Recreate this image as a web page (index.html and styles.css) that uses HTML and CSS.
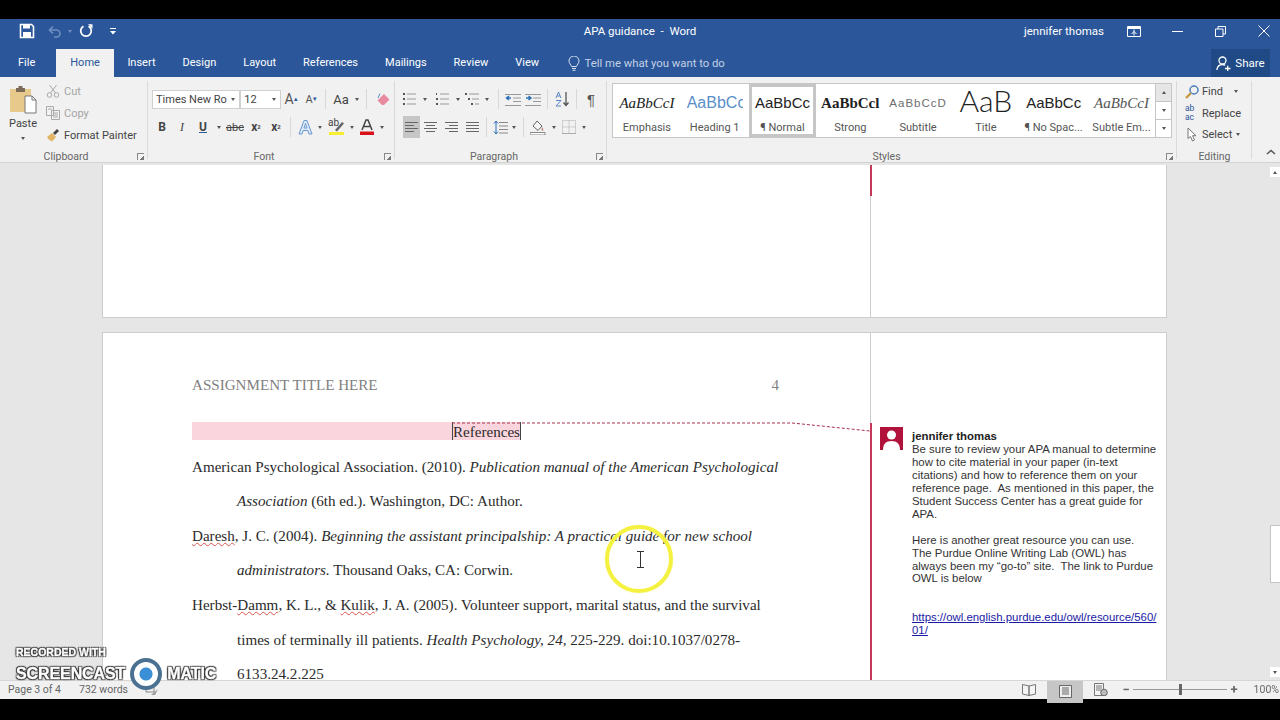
FILE: index.html
```html
<!DOCTYPE html>
<html lang="en">

<head>
    <meta charset="UTF-8">
    <title>APA guidance - Word</title>
    <link rel="stylesheet" href="styles.css">
</head>

<body>
    <div class="app">
        <!-- title bar -->
        <div class="titlebar">
            <div class="quick">
                <svg class="q-save" width="16" height="16" viewBox="0 0 16 16"><path d="M1.5 1.5h11l2 2v11h-13z" fill="none" stroke="#fff" stroke-width="1.6"/><path d="M4 1.5h7v4H4zM4 9h8v5.5H4z" fill="#fff"/></svg>
                <svg class="q-undo" width="14" height="14" viewBox="0 0 14 14"><path d="M2 6h6.5a3.5 3.5 0 0 1 0 7H6M5 2.5 1.5 6 5 9.500" fill="none" stroke="#6f8fc0" stroke-width="1.6"/></svg>
                <span class="q-caret dim"></span>
                <svg class="q-redo" width="14" height="14" viewBox="0 0 14 14"><path d="M9.500 2.200a5.300 5.300 0 1 1-5 0" fill="none" stroke="#fff" stroke-width="1.800"/><path d="M9 .2h4.500v4.500z" fill="#fff"/></svg>
                <svg class="q-custom" width="8" height="8" viewBox="0 0 8 8"><path d="M1 1h6v1H1zM1 4h6L4 7.500z" fill="#fff"/></svg>
            </div>
            <div class="doc-title">APA guidance &nbsp;-&nbsp; Word</div>
            <div class="winctl">
                <span class="user">jennifer thomas</span>
                <span class="win-btn"><svg width="14" height="11" viewBox="0 0 14 11"><path d="M.5.500h13v10H.5z" fill="none" stroke="#fff"/><path d="M1 1h12v2H1z" fill="#fff"/><path d="M7 3.500v6M4.500 8 7 5.500 9.500 8" fill="none" stroke="#fff"/></svg></span>
                <span class="win-btn"><svg width="11" height="11" viewBox="0 0 11 11"><path d="M0 5.500h11" stroke="#fff"/></svg></span>
                <span class="win-btn"><svg width="11" height="11" viewBox="0 0 11 11"><path d="M.5 3h7.500v7.500H.5zM3 3V.5h7.500V8H8" fill="none" stroke="#fff"/></svg></span>
                <span class="win-btn"><svg width="12" height="12" viewBox="0 0 12 12"><path d="M.5.500l11 11M11.500.500l-11 11" stroke="#fff"/></svg></span>
            </div>
        </div>

        <!-- tabs -->
        <div class="tabs">
            <span class="tab tab-file">File</span>
            <span class="tab active">Home</span>
            <span class="tab">Insert</span>
            <span class="tab">Design</span>
            <span class="tab">Layout</span>
            <span class="tab">References</span>
            <span class="tab">Mailings</span>
            <span class="tab">Review</span>
            <span class="tab">View</span>
            <span class="tell">
                <svg width="12" height="15" viewBox="0 0 12 15"><path d="M3.500 10.500C3 8.500 1 7.500 1 5a5 5 0 0 1 10 0c0 2.500-2 3.500-2.500 5.500zM4 12.500h4M4.500 14.300h3" fill="none" stroke="#d6e0ef"/></svg>
                Tell me what you want to do
            </span>
            <span class="share">
                <svg width="15" height="15" viewBox="0 0 15 15"><circle cx="6.500" cy="4.500" r="3.500" fill="none" stroke="#fff" stroke-width="1.300"/><path d="M.8 14c.5-3.500 2.500-5.500 5.700-5.500 1 0 2 .3 2.700.8M9 12.500h5.500M11.700 9.800v5.200" fill="none" stroke="#fff" stroke-width="1.300"/></svg>
                Share
            </span>
        </div>

        <!-- ribbon -->
        <div class="ribbon">
            <div class="group g-clipboard">
                <div class="group-body clip-body">
                    <div class="paste">
                        <svg width="28" height="29" viewBox="0 0 28 29"><path d="M1 4h21v23H1z" fill="#e8c98c"/><path d="M7 3h9v4H7z" fill="#7a6a5a"/><path d="M9.500 1h4v3h-4z" fill="#7a6a5a"/><path d="M16 11h7l4 4v13H16z" fill="#fff" stroke="#777"/><path d="M23 11v4h4" fill="none" stroke="#777"/></svg>
                        <span class="paste-label">Paste</span>
                        <span class="caret"></span>
                    </div>
                    <div class="clip-list">
                        <div class="clip-row dim-row">
                            <svg width="14" height="14" viewBox="0 0 14 14"><circle cx="3.500" cy="11" r="2.300" fill="none" stroke="#aaa"/><circle cx="10.500" cy="11" r="2.300" fill="none" stroke="#aaa"/><path d="M4.500 9 10.500 1M9.500 9 3.500 1" stroke="#aaa" fill="none"/></svg>
                            Cut
                        </div>
                        <div class="clip-row dim-row">
                            <svg width="14" height="14" viewBox="0 0 14 14"><path d="M.5.500h7v9h-7zM5.500 4.500h8v9h-8z" fill="#f2f2f2" stroke="#aaa"/><path d="M7 7h5M7 9h5M7 11h5M2 3h4" stroke="#aaa"/></svg>
                            Copy
                        </div>
                        <div class="clip-row">
                            <svg width="14" height="14" viewBox="0 0 14 14"><path d="M1 9 6 5l4 4-4 4.500C4 13 2 11 1 9z" fill="#e2b565"/><path d="M7 5 11 1l2 2-4 4z" fill="#444"/></svg>
                            Format Painter
                        </div>
                    </div>
                </div>
                <div class="group-label label-clip">Clipboard<span class="launcher"></span></div>
            </div>

            <div class="group g-font">
                <div class="group-body">
                    <div class="tool-row">
                        <span class="combo combo-name">Times New Ro<span class="caret"></span></span>
                        <span class="combo combo-size">12<span class="caret"></span></span>
                        <span class="tool w20 glyph-a">A<sup>&#9652;</sup></span>
                        <span class="tool w20 glyph-a small">A<sup>&#9662;</sup></span>
                        <span class="sep"></span>
                        <span class="tool w22 txt-aa">Aa</span><span class="tool w10"><span class="caret"></span></span>
                        <span class="sep"></span>
                        <span class="tool w24"><svg width="15" height="15" viewBox="0 0 15 15"><path d="M6 13 1.500 8.500 8 2l5.500 5.500L8 13z" fill="#e88aa0"/><path d="M4 1.500 2 6" stroke="#5a87c5"/></svg></span>
                    </div>
                    <div class="tool-row">
                        <span class="tool w20 fmt bold">B</span>
                        <span class="tool w20 fmt ital">I</span>
                        <span class="tool w22 fmt under">U</span>
                        <span class="tool w10"><span class="caret"></span></span>
                        <span class="tool w22 fmt strike">abc</span>
                        <span class="tool w20 fmt bold">x<sub>2</sub></span>
                        <span class="tool w20 fmt bold">x<sup>2</sup></span>
                        <span class="sep"></span>
                        <span class="tool w20"><svg width="15" height="16" viewBox="0 0 15 16"><path d="M1 15 6 1.500h3L14 15h-3l-1.200-3.500H5.200L4 15zM6 9h3L7.500 4.500z" fill="#dbe8f6" stroke="#6c9bd2" fill-rule="evenodd"/></svg></span>
                        <span class="tool w10"><span class="caret"></span></span>
                        <span class="tool w22 aly"><span class="aly-text">ab</span><svg width="17" height="17" viewBox="0 0 17 17"><path d="M7 11 14 3l2 1.500-7 8z" fill="#666"/><path d="M1 13h15v3H1z" fill="#f7ee2f"/></svg></span>
                        <span class="tool w10"><span class="caret"></span></span>
                        <span class="tool w20"><svg width="16" height="16" viewBox="0 0 16 16"><path d="M3 11 7 1h2l4 10M5 7.500h6" fill="none" stroke="#444" stroke-width="1.500"/><path d="M1 12.500h14V16H1z" fill="#d8131c"/></svg></span>
                        <span class="tool w10"><span class="caret"></span></span>
                    </div>
                </div>
                <div class="group-label label-shift">Font<span class="launcher"></span></div>
            </div>

            <div class="group g-para">
                <div class="group-body">
                    <div class="tool-row">
                        <span class="tool w18"><svg width="14" height="14" viewBox="0 0 14 14"><path d="M1 1h2v2H1zM1 6h2v2H1zM1 11h2v2H1z" fill="#555"/><path d="M5 2h9M5 7h9M5 12h9" stroke="#999"/></svg></span>
                        <span class="tool w14"><span class="caret"></span></span>
                        <span class="tool w20"><svg width="14" height="14" viewBox="0 0 14 14"><path d="M1 1h1v2H1zM1 6h2v2H1zM1 11h2v2H1z" fill="#555"/><path d="M5 2h9M5 7h9M5 12h9" stroke="#999"/></svg></span>
                        <span class="tool w12"><span class="caret"></span></span>
                        <span class="tool w16"><svg width="14" height="14" viewBox="0 0 14 14"><path d="M0 1h2v2H0zM3 6h2v2H3zM6 11h2v2H6z" fill="#555"/><path d="M4 2h10M7 7h7M10 12h4" stroke="#999"/></svg></span>
                        <span class="tool w14"><span class="caret"></span></span>
                        <span class="sep"></span>
                        <span class="tool w20"><svg width="16" height="13" viewBox="0 0 16 13"><path d="M8 5h8M8 8.500h8M0 12.500h16M0 1.500h16" stroke="#999"/><path d="M6 5H2M4 3 1.500 5 4 7" fill="none" stroke="#2b6fb5" stroke-width="1.500"/></svg></span>
                        <span class="tool w20"><svg width="16" height="13" viewBox="0 0 16 13"><path d="M0 1.500h16M8 5h8M8 8.500h8M0 12.500h16" stroke="#999"/><path d="M1 5h4M3.500 3 6 5 3.500 7" fill="none" stroke="#2b6fb5" stroke-width="1.500"/></svg></span>
                        <span class="sep"></span>
                        <span class="tool w20"><svg width="15" height="16" viewBox="0 0 15 16"><path d="M1 7 3.500 1 6 7M2 5h3M1 9.500h5L1 15h5" fill="none" stroke="#5a87c5"/><path d="M11 1v13M8.500 11.500 11 14.500l2.500-3" fill="none" stroke="#555" stroke-width="1.300"/></svg></span>
                        <span class="sep"></span>
                        <span class="tool w20 pilcrow">&para;</span>
                    </div>
                    <div class="tool-row row-align">
                        <span class="tool w17 on"><svg width="13" height="11" viewBox="0 0 13 11"><path d="M0 .5h13M0 3.500h9M0 6.500h13M0 9.500h9" stroke="#666"/></svg></span>
                        <span class="tool w21"><svg width="13" height="11" viewBox="0 0 13 11"><path d="M0 .5h13M2 3.500h9M0 6.500h13M2 9.500h9" stroke="#666"/></svg></span>
                        <span class="tool w21"><svg width="13" height="11" viewBox="0 0 13 11"><path d="M0 .5h13M4 3.500h9M0 6.500h13M4 9.500h9" stroke="#666"/></svg></span>
                        <span class="tool w20"><svg width="13" height="11" viewBox="0 0 13 11"><path d="M0 .5h13M0 3.500h13M0 6.500h13M0 9.500h13" stroke="#666"/></svg></span>
                        <span class="sep"></span>
                        <span class="tool w18"><svg width="15" height="15" viewBox="0 0 15 15"><path d="M6 2.500h9M6 6h9M6 9.500h9M6 13h9" stroke="#888"/><path d="M3 1v13M1 3.500 3 1l2 2.500M1 11.500 3 14l2-2.500" fill="none" stroke="#2b6fb5"/></svg></span>
                        <span class="tool w10"><span class="caret"></span></span>
                        <span class="sep"></span>
                        <span class="tool w20"><svg width="16" height="16" viewBox="0 0 16 16"><path d="M3 7 7 2l5 5-4 4.500z" fill="#f6f6f6" stroke="#666"/><path d="M12 8c1 1.500 1.800 2.500 1 3.500s-2 0-1-3.500z" fill="#c77"/><path d="M0 13.500h15V16H0z" fill="#fff" stroke="#888"/></svg></span>
                        <span class="tool w12"><span class="caret"></span></span>
                        <span class="tool w18"><svg width="14" height="14" viewBox="0 0 14 14"><path d="M.5.500h13v13H.5zM7 .5v13M.5 7h13" fill="none" stroke="#aaa" stroke-dasharray="1 1"/><path d="M0 13.500h14" stroke="#aaa"/></svg></span>
                        <span class="tool w12"><span class="caret"></span></span>
                    </div>
                </div>
                <div class="group-label label-shift">Paragraph<span class="launcher"></span></div>
            </div>

            <div class="group g-styles">
                <div class="group-body">
                    <div class="gallery">
                        <div class="style-item"><span class="preview p-emph">AaBbCcI</span><span class="style-name">Emphasis</span></div>
                        <div class="style-item"><span class="preview p-h1">AaBbCc</span><span class="style-name">Heading 1</span></div>
                        <div class="style-item selected"><span class="preview p-normal">AaBbCc</span><span class="style-name">&para; Normal</span></div>
                        <div class="style-item"><span class="preview p-strong">AaBbCcl</span><span class="style-name">Strong</span></div>
                        <div class="style-item"><span class="preview p-sub">AaBbCcD</span><span class="style-name">Subtitle</span></div>
                        <div class="style-item"><span class="preview p-title">AaB</span><span class="style-name">Title</span></div>
                        <div class="style-item"><span class="preview p-normal">AaBbCc</span><span class="style-name">&para; No Spac...</span></div>
                        <div class="style-item"><span class="preview p-emph p-subtle">AaBbCcI</span><span class="style-name">Subtle Em...</span></div>
                        <div class="gallery-scroll">
                            <span class="gs gs-up"><span class="caret caret-up"></span></span>
                            <span class="gs"><span class="caret"></span></span>
                            <span class="gs gs-more"><span class="caret"></span></span>
                        </div>
                    </div>
                </div>
                <div class="group-label">Styles<span class="launcher"></span></div>
            </div>

            <div class="group g-edit">
                <div class="group-body edit-list">
                    <div class="edit-row">
                        <svg width="14" height="14" viewBox="0 0 14 14"><circle cx="9" cy="5" r="4" fill="none" stroke="#4a7ebb" stroke-width="1.500"/><path d="M6 8 1 13" stroke="#c59a45" stroke-width="2.400"/></svg>
                        Find<span class="caret"></span>
                    </div>
                    <div class="edit-row">
                        <span class="ab-ac">ab<br>ac</span>
                        Replace
                    </div>
                    <div class="edit-row tight">
                        <svg width="14" height="15" viewBox="0 0 14 15"><path d="M3 1v10.500L5.500 9.500 7.500 14l2-1-2-4.300H11z" fill="#fff" stroke="#777"/></svg>
                        Select<span class="caret"></span>
                    </div>
                </div>
                <div class="group-label">Editing</div>
            </div>

            <div class="collapse">
                <svg width="10" height="6" viewBox="0 0 10 6"><path d="M1 5 5 1.500 9 5" fill="none" stroke="#555" stroke-width="1.500"/></svg>
            </div>
        </div>

        <!-- document -->
        <div class="doc">
            <div class="doc-view">
                <div class="page page-prev">
                    <div class="page-body"></div>
                    <div class="page-side"><span class="prev-bar"></span></div>
                </div>
                <div class="page">
                    <div class="page-body body-text">
                        <div class="header-line"><span>ASSIGNMENT TITLE HERE</span><span>4</span></div>
                        <p class="line heading"><span class="hl"><span class="hl-text">References</span></span></p>
                        <p class="line">American Psychological Association. (2010). <em>Publication manual of the American Psychological</em></p>
                        <p class="line hang"><em>Association</em> (6th ed.). Washington, DC: Author.</p>
                        <p class="line"><span class="spell">Daresh</span>, J. C. (2004). <em>Beginning the assistant principalship: A practical guide for new school</em></p>
                        <p class="line hang"><em>administrators.</em> Thousand Oaks, CA: Corwin.</p>
                        <p class="line">Herbst-<span class="spell">Damm</span>, K. L., &amp; <span class="spell">Kulik</span>, J. A. (2005). Volunteer support, marital status, and the survival</p>
                        <p class="line hang">times of terminally ill patients. <em>Health Psychology, 24,</em> 225-229. doi:10.1037/0278-</p>
                        <p class="line hang">6133.24.2.225</p>
                    </div>
                    <div class="page-side">
                        <div class="comment">
                            <svg class="avatar" width="23" height="23" viewBox="0 0 23 23"><path d="M0 0h23v23H0z" fill="#b0123b"/><circle cx="11.500" cy="8" r="4.500" fill="#fff"/><path d="M3 23c0-6 3-9 8.500-9S20 17 20 23z" fill="#fff"/></svg>
                            <div class="comment-text">
                                <div class="comment-author">jennifer thomas</div>
                                Be sure to review your APA manual to determine<br>
                                how to cite material in your paper (in-text<br>
                                citations) and how to reference them on your<br>
                                reference page.&nbsp; As mentioned in this paper, the<br>
                                Student Success Center has a great guide for<br>
                                APA.<br>
                                <br>
                                Here is another great resource you can use.<br>
                                The Purdue Online Writing Lab (OWL) has<br>
                                always been my &ldquo;go-to&rdquo; site.&nbsp; The link to Purdue<br>
                                OWL is below<br>
                                <br>
                                <br>
                                <a class="comment-link" href="#">https://owl.english.purdue.edu/owl/resource/560/<br>01/</a>
                            </div>
                        </div>
                    </div>
                </div>
            </div>
            <div class="vscroll">
                <span class="vs-btn"><span class="caret caret-up"></span></span>
                <span class="vs-thumb"></span>
                <span class="vs-btn"><span class="caret"></span></span>
            </div>

            <!-- dashed line from the comment to the text -->
            <svg class="connector" width="1280" height="517" viewBox="0 0 1280 517"><path d="M452 260H792L870 268" fill="none" stroke="#a8324f" stroke-dasharray="3 2"/></svg>
            <!-- recorder cursor highlight -->
            <div class="cursor-ring"></div>
            <svg class="cursor-beam" width="9" height="17" viewBox="0 0 9 17"><path d="M1 .5h7M1 16.500h7M4.500 .5v16" fill="none" stroke="#333"/></svg>
        </div>

        <!-- status bar -->
        <div class="status">
            <span class="st-page">Page 3 of 4</span>
            <span class="st-words">732 words</span>
            <svg class="st-macro" width="14" height="13" viewBox="0 0 14 13"><path d="M1 1h8v8H1z" fill="none" stroke="#888"/><path d="M6 12l7-6-3 6z" fill="#999"/></svg>
            <span class="st-views">
                <span class="view-btn"><svg width="14" height="13" viewBox="0 0 14 13"><path d="M.5 1.500 7 3v9.500L.5 11zM13.500 1.500 7 3v9.500l6.500-1.500z" fill="#f4f4f4" stroke="#777"/></svg></span>
                <span class="view-btn on"><svg width="13" height="13" viewBox="0 0 13 13"><path d="M.5.5h12v12H.5z" fill="#eee" stroke="#666"/><path d="M3 3h7M3 5h7M3 7h7M3 9h7" stroke="#666"/></svg></span>
                <span class="view-btn"><svg width="14" height="13" viewBox="0 0 14 13"><path d="M.5.5h9v12h-9z" fill="#f4f4f4" stroke="#777"/><path d="M2 3h6M2 5h6M2 7h5" stroke="#777"/><circle cx="10" cy="9.500" r="3.300" fill="#bbb" stroke="#666"/></svg></span>
            </span>
            <span class="zoom-minus">&minus;</span>
            <span class="slider"><span class="thumb"></span></span>
            <span class="zoom-plus">+</span>
            <span class="zoom-val">100%</span>
        </div>
    </div>

    <!-- screen recorder watermark -->
    <div class="watermark">
        <div class="wm-top">RECORDED WITH</div>
        <div class="wm-bottom">
            <span>SCREENCAST</span>
            <span class="wm-logo"></span>
            <span>MATIC</span>
        </div>
    </div>
</body>

</html>
```

FILE: styles.css
```css
* {
    margin: 0px;
    padding: 0px;
    box-sizing: border-box;
}

body {
    background-color: #000;
    font-family: Roboto, "Open Sans", sans-serif;
    height: 720px;
    overflow: hidden;
    position: relative;
}

/* the source is a video frame, everything is a bit soft */
.app {
    margin-top: 19px;
    height: 680px;
    display: flex;
    flex-direction: column;
    filter: blur(0.35px);
}

/* title bar */
.titlebar {
    height: 24px;
    background-color: #2b579a;
    color: #fff;
    display: grid;
    grid-template-columns: 1fr auto 1fr;
    align-items: center;
    font-size: 11.5px;
}

.quick {
    display: flex;
    align-items: center;
    padding-left: 19px;
}

.q-undo {
    margin-left: 13px;
}

.q-caret {
    width: 0;
    height: 0;
    margin-left: 6px;
    border-left: 2.5px solid transparent;
    border-right: 2.5px solid transparent;
    border-top: 3px solid #6f8fc0;
}

.q-redo {
    margin-left: 7px;
}

.q-custom {
    margin-left: 16px;
}

.winctl {
    display: flex;
    align-items: center;
    justify-content: flex-end;
    gap: 11.500px;
}

.user {
    margin-right: 2px;
    white-space: nowrap;
}

.win-btn {
    width: 32px;
    display: flex;
    justify-content: center;
    align-items: center;
}

/* tabs */
.tabs {
    height: 34px;
    padding: 6px 10px 0px 4px;
    background-color: #2b579a;
    color: #fff;
    display: flex;
    font-size: 11px;
}

.tab {
    padding: 0px 13.5px;
    line-height: 28px;
    white-space: nowrap;
}

.tab-file {
    padding: 0px 21px 0px 14px;
}

.tab.active {
    background-color: #f1f1f1;
    color: #2b579a;
    padding: 0px 14px;
}

.tell {
    margin-left: 15px;
    display: flex;
    align-items: center;
    gap: 5px;
    color: #c3d1e6;
    white-space: nowrap;
    font-size: 11.300px;
}

.share {
    margin-left: auto;
    width: 59px;
    background-color: #1f4a86;
    display: flex;
    align-items: center;
    justify-content: center;
    gap: 4px;
    font-size: 11.500px;
}

/* ribbon */
.ribbon {
    height: 86px;
    background-color: #f1f1f1;
    border-bottom: 1px solid #d2d2d2;
    display: flex;
    color: #444;
    font-size: 11px;
    flex-shrink: 0;
}

.group {
    display: flex;
    flex-direction: column;
    position: relative;
    flex-shrink: 0;
}

.group::after {
    content: '';
    position: absolute;
    right: 0;
    top: 4px;
    bottom: 3px;
    width: 1px;
    background-color: #dadada;
}

.group-body {
    height: 72px;
    flex-shrink: 0;
}

.group-label {
    height: 13px;
    line-height: 15px;
    text-align: center;
    font-size: 10.5px;
    color: #666;
    position: relative;
}

.label-clip {
    padding-right: 16px;
}

.label-shift {
    padding-right: 19px;
}

.launcher {
    position: absolute;
    right: 4px;
    top: 4px;
    width: 7px;
    height: 7px;
    border-left: 1px solid #888;
    border-top: 1px solid #888;
    background: linear-gradient(135deg, transparent 60%, #777 60%);
}

.caret {
    display: inline-block;
    width: 0;
    height: 0;
    border-left: 2.500px solid transparent;
    border-right: 2.500px solid transparent;
    border-top: 3px solid #555;
}

.caret-up {
    border-top: 0;
    border-bottom: 3px solid #555;
}

.g-clipboard {
    width: 148px;
}

.clip-body {
    display: flex;
    padding-top: 8px;
}

.paste {
    width: 46px;
    display: flex;
    flex-direction: column;
    align-items: center;
    color: #444;
}

.paste-label {
    margin-top: 1px;
    line-height: 17px;
}

.paste .caret {
    margin-top: 5px;
}

.clip-list {
    display: flex;
    flex-direction: column;
    margin-top: -5px;
}

.clip-row {
    height: 22px;
    display: flex;
    align-items: center;
    gap: 4px;
    white-space: nowrap;
}

.dim-row {
    color: #a5a5a5;
}

.g-font {
    width: 247px;
    padding-left: 4px;
}

.g-para {
    width: 212px;
    padding-left: 5px;
}

.group-body .tool-row:first-child {
    margin-top: 12px;
}

.tool-row {
    display: flex;
    align-items: center;
    height: 20px;
    margin-bottom: 8px;
}

.row-align {
    margin-left: 3px;
}

.tool {
    height: 20px;
    display: flex;
    align-items: center;
    justify-content: center;
    flex-shrink: 0;
}

.w10 { width: 10px; }
.w12 { width: 12px; }
.w14 { width: 14px; }
.w16 { width: 16px; }
.w17 { width: 17px; }
.w18 { width: 18px; }
.w20 { width: 20px; }
.w21 { width: 21px; }
.w22 { width: 22px; }
.w24 { width: 24px; }

.sep {
    width: 1px;
    height: 20px;
    margin: 0px 4px;
    background-color: #d8d8d8;
    flex-shrink: 0;
}

.combo {
    height: 19px;
    background-color: #fff;
    border: 1px solid #d0d0d0;
    display: flex;
    align-items: center;
    justify-content: space-between;
    padding: 0px 4px 0px 3px;
    font-size: 11px;
    white-space: nowrap;
    color: #444;
}

.combo-name {
    width: 89px;
}

.combo-size {
    width: 41px;
}

.glyph-a {
    font-size: 14px;
    color: #555;
}

.glyph-a.small {
    font-size: 11px;
}

.glyph-a sup {
    font-size: 7px;
    color: #2b579a;
    line-height: 0;
}

.txt-aa {
    font-size: 13px;
}

.fmt {
    font-size: 12px;
    color: #444;
}

.bold {
    font-weight: 700;
}

.fmt sub, .fmt sup {
    font-size: 6px;
    line-height: 0;
}

.ital {
    font-style: italic;
    font-family: "Liberation Serif", serif;
}

.under {
    font-weight: 700;
    text-decoration: underline;
    text-decoration-color: #2b579a;
}

.strike {
    text-decoration: line-through;
    font-size: 11px;
}

.aly {
    position: relative;
}

.aly-text {
    position: absolute;
    left: 3px;
    top: 0;
    font-size: 10px;
    line-height: 12px;
    color: #444;
}

.pilcrow {
    font-size: 15px;
    color: #555;
    font-family: "Liberation Sans", sans-serif;
}

.on {
    background-color: #c6c6c6;
    height: 22px;
}

.g-styles {
    width: 570px;
    padding-left: 5px;
}

.g-styles .group-label {
    padding-right: 16px;
}

.g-styles .group-body {
    padding-top: 6px;
}

.gallery {
    width: 560px;
    height: 55px;
    background-color: #fff;
    border: 1px solid #c6c6c6;
    display: flex;
}

.style-item {
    width: 67.800px;
    height: 53px;
    display: flex;
    flex-direction: column;
    align-items: center;
    padding-top: 5px;
    overflow: hidden;
    flex-shrink: 0;
}

.style-item.selected {
    border: 3px solid #c6c6c6;
    padding-top: 2px;
}

.preview {
    height: 28px;
    line-height: 28px;
    white-space: nowrap;
    color: #222;
    font-size: 15px;
}

.style-name {
    font-size: 11px;
    line-height: 17px;
    color: #555;
    white-space: nowrap;
    margin-top: 2px;
}

.p-emph {
    font-family: "Liberation Serif", serif;
    font-style: italic;
}

.p-subtle {
    color: #555;
}

.p-h1 {
    color: #5b8fc7;
    width: 56px;
    overflow: hidden;
    font-size: 16px;
    font-family: "Liberation Sans", sans-serif;
}

.p-normal {
    font-family: "Liberation Sans", sans-serif;
}

.p-strong {
    font-family: "Liberation Serif", serif;
    font-weight: 700;
}

.p-sub {
    color: #6d6d6d;
    font-size: 11.500px;
    letter-spacing: 1px;
    font-family: "Liberation Sans", sans-serif;
}

.p-title {
    font-size: 30px;
    line-height: 22px;
    font-family: Lato, "Liberation Sans", sans-serif;
    font-weight: 300;
}

.gallery-scroll {
    margin-left: auto;
    width: 17px;
    display: flex;
    flex-direction: column;
    border-left: 1px solid #c6c6c6;
}

.gs {
    flex: 1;
    display: flex;
    align-items: center;
    justify-content: center;
    border-bottom: 1px solid #c6c6c6;
}

.gs-up {
    background-color: #e6e6e6;
}

.gs-more {
    border-bottom: 0;
}

.g-edit {
    width: 75px;
}

.edit-list {
    padding: 4px 0px 0px 8px;
}

.edit-row {
    height: 21.500px;
    display: flex;
    align-items: center;
    gap: 3px;
    white-space: nowrap;
}

.edit-row .caret {
    margin-left: 8px;
}

.edit-row.tight .caret {
    margin-left: 1px;
}

.ab-ac {
    font-size: 8.500px;
    line-height: 9px;
    width: 14px;
    color: #2b579a;
}

.collapse {
    flex: 1;
    display: flex;
    justify-content: flex-end;
    align-items: flex-end;
    padding: 0px 4px 7px 0px;
}

/* document */
.doc {
    flex: 1;
    background-color: #e6e6e6;
    display: flex;
    position: relative;
    overflow: hidden;
}

.doc-view {
    flex: 1;
    padding: 2px 0px 0px 102px;
}

.page {
    width: 1065px;
    height: 420px;
    background-color: #fff;
    border: 1px solid #cdcdcd;
    display: flex;
    margin-bottom: 14px;
}

.page-prev {
    height: 153px;
    border-top: 0;
}

.page-body {
    width: 767px;
    flex-shrink: 0;
}

.page-side {
    flex: 1;
    border-left: 1px solid #cdcdcd;
    position: relative;
}

.prev-bar {
    position: absolute;
    left: -1px;
    top: 0;
    width: 2px;
    height: 31px;
    background-color: #c5385a;
}

.body-text {
    padding: 42px 91px 0px 89px;
    font-family: "Liberation Serif", serif;
    font-size: 15.100px;
    color: #2b2b2b;
}

.header-line {
    display: flex;
    justify-content: space-between;
    height: 20px;
    line-height: 20px;
    color: #7f7f7f;
    margin-bottom: 19px;
}

.line {
    height: 34.600px;
    line-height: 34.600px;
    white-space: nowrap;
}

.hang {
    padding-left: 45px;
}

.heading {
    height: 35.600px;
    padding-top: 8px;
}

.hl {
    display: block;
    width: 329px;
    height: 18px;
    line-height: 20px;
    background-color: #fbd5de;
    text-align: right;
}

.hl-text {
    display: inline-block;
    height: 18px;
    line-height: 20px;
    border-left: 1px solid #444;
    border-right: 1px solid #444;
}

.spell {
    text-decoration: underline wavy #d9534f;
    text-decoration-thickness: 1px;
}

.comment {
    margin: 90px 0px 0px -1px;
    border-left: 2px solid #c5385a;
    padding: 3px 0px 0px 8px;
    height: 330px;
    display: flex;
    gap: 9px;
}

.avatar {
    flex-shrink: 0;
    margin-top: 1px;
}

.comment-text {
    font-family: "Liberation Sans", sans-serif;
    font-size: 11.400px;
    line-height: 12.950px;
    color: #333;
    white-space: nowrap;
    padding-top: 4px;
}

.comment-author {
    font-weight: 700;
    color: #222;
}

.comment-link {
    color: #1a1aa6;
}

.vscroll {
    width: 10px;
    display: flex;
    flex-direction: column;
    padding: 4px 0px 3px;
}

.vs-btn {
    height: 10px;
    background-color: #fff;
    display: flex;
    align-items: center;
    justify-content: center;
}

.vs-thumb {
    height: 58px;
    background-color: #fff;
    border: 1px solid #c6c6c6;
    border-right: 0;
    margin: 348px 0px 0px;
}

.vs-thumb + .vs-btn {
    margin-top: auto;
}

.connector {
    position: absolute;
    left: 0;
    top: 0;
}

.cursor-ring {
    position: absolute;
    left: 605px;
    top: 362px;
    width: 68px;
    height: 68px;
    border: 4px solid #f4f140;
    border-radius: 50%;
    box-shadow: 0 0 1px #f4f140;
}

.cursor-beam {
    position: absolute;
    left: 636px;
    top: 388px;
}

/* status bar */
.status {
    height: 19px;
    background-color: #f1f1f1;
    border-top: 1px solid #d6d6d6;
    display: flex;
    align-items: center;
    font-size: 10.500px;
    color: #666;
    padding: 0px 0px 1px 8px;
    flex-shrink: 0;
}

.st-words {
    margin-left: 18px;
}

.st-macro {
    margin-left: 17px;
}

.st-views {
    display: flex;
    margin: 0px 1px 0px auto;
    height: 18px;
}

.view-btn {
    width: 36px;
    display: flex;
    align-items: center;
    justify-content: center;
}

.view-btn.on {
    background-color: #c6c6c6;
}

.zoom-minus, .zoom-plus {
    font-size: 13px;
    font-weight: 700;
    width: 12px;
    text-align: center;
}

.slider {
    width: 94px;
    height: 1px;
    background-color: #999;
    position: relative;
    margin: 0px 1px;
}

.thumb {
    position: absolute;
    left: 46px;
    top: -5px;
    width: 3px;
    height: 11px;
    background-color: #666;
}

.zoom-val {
    width: 40px;
    text-align: right;
    padding-right: 1px;
}

/* recorder watermark */
.watermark {
    position: absolute;
    left: 16px;
    top: 645px;
    color: #fff;
    font-family: "Liberation Sans", sans-serif;
    font-weight: 700;
    -webkit-text-stroke: 0.3px #fff;
    text-shadow: 1px 1px 1px #333, -1px -1px 1px #333, 1px -1px 1px #333, -1px 1px 1px #333;
}

.wm-top {
    font-size: 10.500px;
    line-height: 14px;
}

.wm-bottom {
    display: flex;
    align-items: center;
    font-size: 16px;
    margin-top: -1px;
    letter-spacing: -0.1px;
}

.wm-logo {
    width: 32px;
    height: 32px;
    margin: 0px 5px;
    border: 4px solid #4a7191;
    border-radius: 50%;
    background: radial-gradient(circle, #3b8fd6 0 6px, #fff 7px);
    flex-shrink: 0;
}
```
